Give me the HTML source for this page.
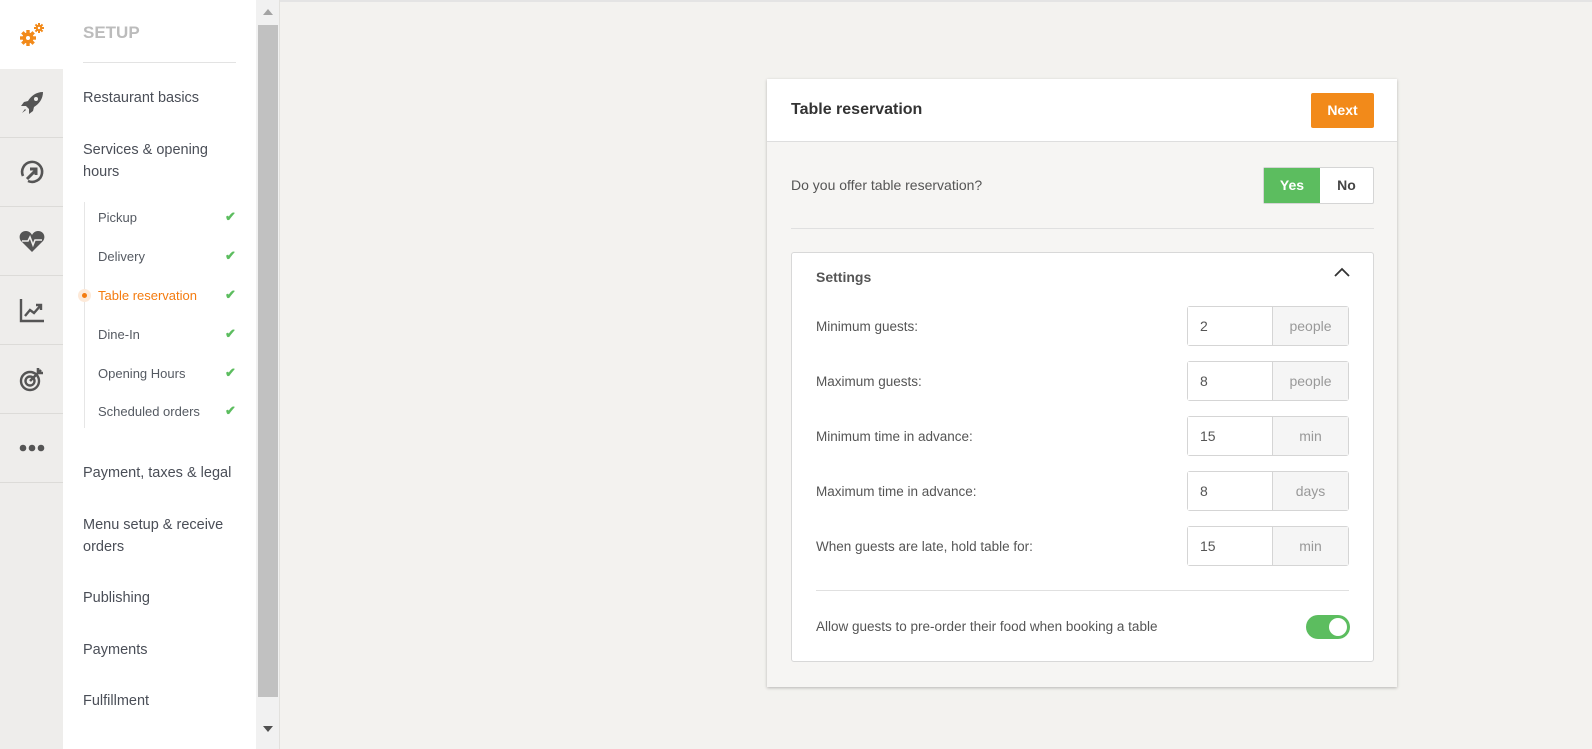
<!DOCTYPE html>
<html><head><style>
*{box-sizing:border-box;margin:0;padding:0}
body{width:1592px;height:749px;overflow:hidden;background:#f3f2ef;font-family:"Liberation Sans",sans-serif;position:relative;color:#444}
.ic{position:absolute;left:0;top:0;width:63px;height:749px;background:#eeedeb}
.icb{position:absolute;left:0;width:63px;height:69px;border-bottom:1px solid #dcdbd8;display:flex;align-items:center;justify-content:center}
.side{position:absolute;left:63px;top:0;width:193px;height:749px;background:#fff}
.sb{position:absolute;left:256px;top:0;width:24px;height:749px;background:#f1f1f1;border-right:1px solid #e2e1de}
.thumb{position:absolute;left:2px;top:25px;width:20px;height:672px;background:#c1c1c1}
.t{position:absolute;left:83px;font-size:14.5px;color:#4a4e57;line-height:22px}
.s{position:absolute;left:98px;font-size:13px;color:#555a62}
.ck{position:absolute;left:225px;color:#5cbd5f;font-size:13px;font-weight:bold}
.card{position:absolute;left:767px;top:79px;width:630px;height:608px;background:#f6f5f3;box-shadow:0 1px 3px rgba(0,0,0,.25)}
.hd{height:63px;background:#fff;border-bottom:1px solid #dedede;position:relative}
.lbl{position:absolute;font-size:13.5px;color:#555}
.inp{position:absolute;left:395px;width:162px;height:40px;border:1px solid #d5d5d5;border-radius:3px;display:flex;font-size:14px}
.inp span:first-child{width:85px;padding-left:12px;line-height:38px;color:#555;background:#fff;border-right:1px solid #d5d5d5}
.inp span:last-child{flex:1;text-align:center;line-height:38px;color:#999;background:#f5f5f5}
</style></head><body>
<div style="position:absolute;top:0;left:0;width:1592px;height:2px;background:#e4e4e4"></div>
<div class="ic">
<div class="icb" style="top:0;background:#fff;border:none"><svg width="30" height="30" viewBox="0 0 30 30"><g fill="#f28a1a"><circle cx="11" cy="18" r="5.5"/><rect x="9.3" y="10" width="3.4" height="16"/><rect x="3" y="16.3" width="16" height="3.4"/><rect x="9.3" y="10" width="3.4" height="16" transform="rotate(45 11 18)"/><rect x="9.3" y="10" width="3.4" height="16" transform="rotate(-45 11 18)"/><circle cx="22" cy="8" r="3.2"/><rect x="21" y="3" width="2" height="10"/><rect x="17" y="7" width="10" height="2"/><rect x="21" y="3" width="2" height="10" transform="rotate(45 22 8)"/><rect x="21" y="3" width="2" height="10" transform="rotate(-45 22 8)"/></g><circle cx="11" cy="18" r="2" fill="#fff"/><circle cx="22" cy="8" r="1.2" fill="#fff"/></svg></div>
<div class="icb" style="top:69px"><svg width="26" height="26" viewBox="0 0 26 26"><path d="M24 2C17 2 12 6 9 11L5 12 2 16 7 16 10 19 10 24 14 21 15 17C20 14 24 9 24 2Z" fill="#555"/><circle cx="17" cy="9" r="2" fill="#eeedeb"/><path d="M6 19 3 23 7 20Z" fill="#555"/></svg></div>
<div class="icb" style="top:138px"><svg width="26" height="26" viewBox="0 0 26 26"><path d="M4 17A10 10 0 1 1 9 22" fill="none" stroke="#555" stroke-width="2.6"/><path d="M8 20 17 11M11 10H17V16" fill="none" stroke="#555" stroke-width="3"/></svg></div>
<div class="icb" style="top:207px"><svg width="26" height="24" viewBox="0 0 26 24"><path d="M13 23 2 12C-1 8 1 2 7 2 10 2 12 4 13 6 14 4 16 2 19 2 25 2 27 8 24 12Z" fill="#555"/><path d="M3 12H9L11 8 14 16 16 11H23" fill="none" stroke="#eeedeb" stroke-width="1.6"/></svg></div>
<div class="icb" style="top:276px"><svg width="26" height="26" viewBox="0 0 26 26"><path d="M2 2V24H25" fill="none" stroke="#555" stroke-width="2.4"/><path d="M6 19 11 13 15 16 22 8M17 8H22V13" fill="none" stroke="#555" stroke-width="2.4"/></svg></div>
<div class="icb" style="top:345px"><svg width="26" height="26" viewBox="0 0 26 26"><circle cx="11" cy="15" r="9" fill="none" stroke="#555" stroke-width="2.4"/><circle cx="11" cy="15" r="4.5" fill="none" stroke="#555" stroke-width="2.4"/><path d="M11 15 22 4M19 2V7H24" fill="none" stroke="#555" stroke-width="2.6"/></svg></div>
<div class="icb" style="top:414px"><svg width="26" height="8"><circle cx="4" cy="4" r="3.3" fill="#555"/><circle cx="13" cy="4" r="3.3" fill="#555"/><circle cx="22" cy="4" r="3.3" fill="#555"/></svg></div>
</div>
<div class="side">
<div style="position:absolute;left:20px;top:23px;font-size:17px;color:#bcbcbc;font-weight:bold">SETUP</div>
<div style="position:absolute;left:20px;top:62px;width:153px;height:1px;background:#e3e3e3"></div>
<div style="position:absolute;left:21px;top:202px;width:1px;height:226px;background:#e6e6e6"></div>
</div>
<div class="t" style="top:87px">Restaurant basics</div>
<div class="t" style="top:139px">Services &amp; opening<br>hours</div>
<div class="s" style="top:210px">Pickup</div><div class="ck" style="top:209px">✔</div>
<div class="s" style="top:249px">Delivery</div><div class="ck" style="top:248px">✔</div>
<div style="position:absolute;left:78px;top:289px;width:13px;height:13px;border-radius:50%;background:#fde9d8"></div><div style="position:absolute;left:82px;top:293px;width:5px;height:5px;border-radius:50%;background:#f47b0f"></div>
<div class="s" style="top:288px;color:#f47b0f">Table reservation</div><div class="ck" style="top:287px">✔</div>
<div class="s" style="top:327px">Dine-In</div><div class="ck" style="top:326px">✔</div>
<div class="s" style="top:366px">Opening Hours</div><div class="ck" style="top:365px">✔</div>
<div class="s" style="top:404px">Scheduled orders</div><div class="ck" style="top:403px">✔</div>
<div class="t" style="top:462px">Payment, taxes &amp; legal</div>
<div class="t" style="top:514px">Menu setup &amp; receive<br>orders</div>
<div class="t" style="top:587px">Publishing</div>
<div class="t" style="top:639px">Payments</div>
<div class="t" style="top:690px">Fulfillment</div>
<div class="sb"><div class="thumb"></div>
<div style="position:absolute;left:7px;top:9px;border:5px solid transparent;border-bottom:6px solid #a3a3a3;border-top:0"></div>
<div style="position:absolute;left:7px;top:726px;border:5px solid transparent;border-top:6px solid #505050;border-bottom:0"></div></div>
<div class="card">
<div class="hd"><div style="position:absolute;left:24px;top:22px;font-size:16px;font-weight:bold;color:#333">Table reservation</div>
<div style="position:absolute;left:544px;top:14px;width:63px;height:35px;background:#f28a1a;border-radius:2px;color:#fff;font-weight:bold;font-size:14px;text-align:center;line-height:35px">Next</div></div>
<div class="lbl" style="left:24px;top:98px;font-size:14px">Do you offer table reservation?</div>
<div style="position:absolute;left:496px;top:88px;width:111px;height:37px;border:1px solid #d5d5d5;border-radius:2px;background:#fff;display:flex;font-size:14px;font-weight:bold">
<span style="width:56px;background:#5cbd5f;color:#fff;text-align:center;line-height:35px">Yes</span><span style="flex:1;text-align:center;line-height:35px;color:#444">No</span></div>
<div style="position:absolute;left:24px;top:149px;width:583px;height:1px;background:#e0e0e0"></div>
<div style="position:absolute;left:24px;top:173px;width:583px;height:410px;background:#fff;border:1px solid #d8d8d8;border-radius:3px">
<div style="position:absolute;left:24px;top:16px;font-size:14px;font-weight:bold;color:#555">Settings</div>
<svg style="position:absolute;left:542px;top:14px" width="16" height="10"><path d="M1 9 8 2 15 9" fill="none" stroke="#333" stroke-width="1.8"/></svg>
<div class="lbl" style="left:24px;top:66px">Minimum guests:</div><div class="inp" style="top:53px"><span>2</span><span>people</span></div>
<div class="lbl" style="left:24px;top:121px">Maximum guests:</div><div class="inp" style="top:108px"><span>8</span><span>people</span></div>
<div class="lbl" style="left:24px;top:176px">Minimum time in advance:</div><div class="inp" style="top:163px"><span>15</span><span>min</span></div>
<div class="lbl" style="left:24px;top:231px">Maximum time in advance:</div><div class="inp" style="top:218px"><span>8</span><span>days</span></div>
<div class="lbl" style="left:24px;top:286px">When guests are late, hold table for:</div><div class="inp" style="top:273px"><span>15</span><span>min</span></div>
<div style="position:absolute;left:24px;top:337px;width:533px;height:1px;background:#e0e0e0"></div>
<div class="lbl" style="left:24px;top:366px">Allow guests to pre-order their food when booking a table</div>
<div style="position:absolute;left:514px;top:362px;width:44px;height:24px;border-radius:12px;background:#5cbd5f"><div style="position:absolute;right:3px;top:3px;width:18px;height:18px;border-radius:50%;background:#fff"></div></div>
</div>
</div>
</body></html>
